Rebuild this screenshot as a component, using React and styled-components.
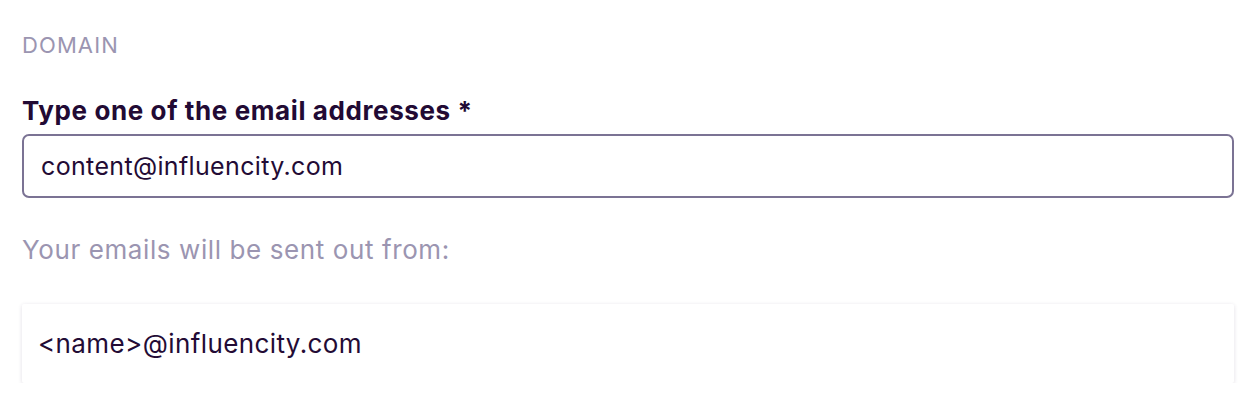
import React from 'react';
import styled, { createGlobalStyle } from 'styled-components';

const GlobalStyle = createGlobalStyle`
  html, body {
    margin: 0;
    padding: 0;
    background: #fff;
  }
  body {
    font-family: Inter, "Noto Sans", sans-serif;
    color: #230b35;
  }
`;

const Page = styled.div`
  padding: 30px 22px 0;
  display: flex;
  flex-direction: column;
`;

const SectionTitle = styled.div`
  font-size: 22px;
  line-height: 30px;
  color: #9b95b1;
  text-transform: uppercase;
  letter-spacing: 1.1px;
`;

const Label = styled.label`
  margin-top: 34px;
  font-size: 26px;
  line-height: 34px;
  font-weight: 700;
  letter-spacing: 0.6px;
  color: #220a34;
`;

const Input = styled.input`
  margin-top: 6px;
  box-sizing: border-box;
  width: 100%;
  height: 64px;
  padding: 0 17px;
  border: 2px solid #7b7394;
  border-radius: 7px;
  font-family: inherit;
  font-size: 25px;
  letter-spacing: 0.35px;
  color: #230b35;
  background: #fff;
  outline: none;
`;

const Hint = styled.p`
  margin: 35px 0 0;
  font-size: 26px;
  line-height: 34px;
  letter-spacing: 0.6px;
  color: #9b95b1;
`;

const Preview = styled.div`
  margin-top: 37px;
  box-sizing: border-box;
  height: 79px;
  display: flex;
  align-items: center;
  padding: 0 16px;
  background: #fff;
  border-radius: 2px;
  box-shadow: 0 1px 4px rgba(40, 20, 70, 0.14);
  font-size: 26px;
  letter-spacing: 0.4px;
  color: #230b35;
`;

export default function App() {
  return (
    <>
      <GlobalStyle />
      <Page>
        <SectionTitle>Domain</SectionTitle>
        <Label htmlFor="email">Type one of the email addresses *</Label>
        <Input id="email" defaultValue="content@influencity.com" />
        <Hint>Your emails will be sent out from:</Hint>
        <Preview>&lt;name&gt;@influencity.com</Preview>
      </Page>
    </>
  );
}
